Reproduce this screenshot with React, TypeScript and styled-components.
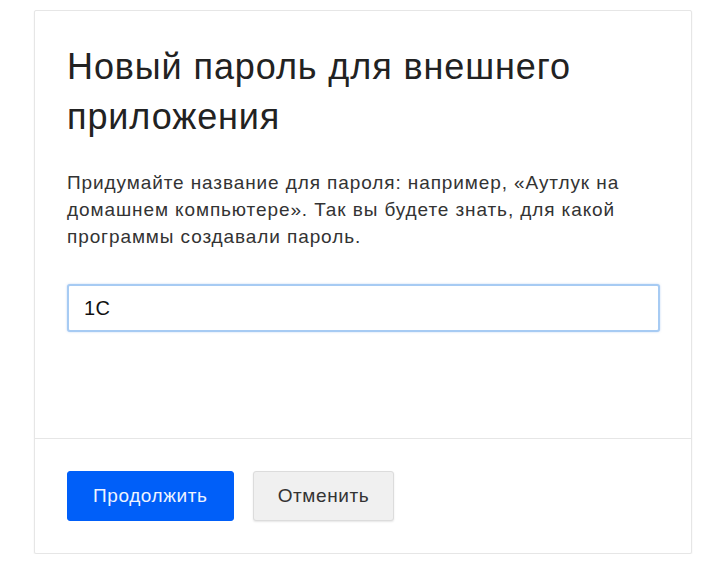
import styled, { createGlobalStyle } from 'styled-components'

const GlobalStyle = createGlobalStyle`
  html, body {
    margin: 0;
    padding: 0;
    background: #fff;
    font-family: "Liberation Sans", Arial, sans-serif;
  }
`

const App = () => {
  return (
    <>
      <GlobalStyle />
      <Page>
        <Card>
          <Body>
            <Title>Новый пароль для внешнего приложения</Title>
            <Hint>
              Придумайте название для пароля: например, «Аутлук на домашнем компьютере». Так вы будете знать, для какой
              программы создавали пароль.
            </Hint>
            <NameInput defaultValue="1C" />
          </Body>
          <Footer>
            <Button $primary>Продолжить</Button>
            <Button>Отменить</Button>
          </Footer>
        </Card>
      </Page>
    </>
  )
}

const Page = styled.div`
  padding: 10px 0 0 34px;
`

const Card = styled.div`
  width: 656px;
  border: 1px solid #e6e6e6;
  border-radius: 2px;
  box-shadow: 0 1px 2px rgba(0, 0, 0, 0.07);
  background: #fff;
`

const Body = styled.div`
  padding: 31px 32px 106px 32px;
  border-bottom: 1px solid #e6e6e6;
`

const Title = styled.h1`
  margin: 0 0 27px;
  width: 560px;
  font-size: 36px;
  line-height: 50px;
  letter-spacing: 0.9px;
  font-weight: normal;
  color: #222;
`

const Hint = styled.p`
  margin: 0 0 34px;
  font-size: 19px;
  line-height: 27px;
  letter-spacing: 0.9px;
  color: #333;
`

const NameInput = styled.input`
  display: block;
  box-sizing: border-box;
  width: 593px;
  height: 48px;
  padding: 0 15px;
  border: 2px solid #a7cbf3;
  border-radius: 3px;
  box-shadow: 0 0 2px rgba(120, 170, 235, 0.5);
  font-family: inherit;
  font-size: 20px;
  letter-spacing: 0.5px;
  color: #111;
  outline: none;
`

const Footer = styled.div`
  display: flex;
  gap: 19px;
  padding: 32px 32px 32px;
`

const Button = styled.button<{ $primary?: boolean }>`
  height: 50px;
  padding: 0 ${p => (p.$primary ? 25 : 24)}px;
  border-radius: 3px;
  font-family: inherit;
  font-size: 19px;
  letter-spacing: 0.6px;
  cursor: pointer;
  border: 1px solid ${p => (p.$primary ? '#005ff9' : '#dcdcdc')};
  background: ${p => (p.$primary ? '#005ff9' : '#f0f0f0')};
  color: ${p => (p.$primary ? '#eef3ff' : '#333')};
  box-shadow: ${p => (p.$primary ? 'none' : '0 1px 2px rgba(0,0,0,0.1)')};
`

export default App
